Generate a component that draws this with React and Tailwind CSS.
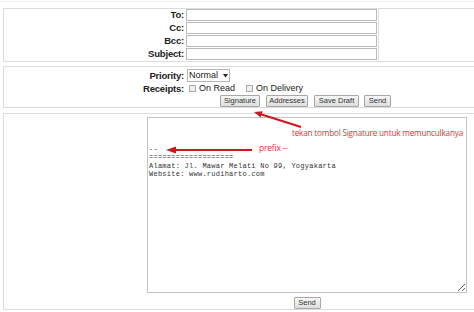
import React from "react";

function Btn({ w, children }) {
  return (
    <div
      className={`${w} h-[12px] flex items-center justify-center border border-[#a8a8a8] rounded-[1px] bg-gradient-to-b from-[#f6f6f6] to-[#dedede] text-[7.5px] leading-none text-[#333]`}
    >
      {children}
    </div>
  );
}

function Row({ label, children }) {
  return (
    <div className="flex h-[13px] items-start">
      <div className="w-[180px] text-right font-bold text-[9.5px] leading-[12px] text-[#222] tracking-[-0.2px]">{label}</div>
      {children}
    </div>
  );
}

export default function App() {
  const sig = "\n\n\n--\n===================\nAlamat: Jl. Mawar Melati No 99, Yogyakarta\nWebsite: www.rudiharto.com";
  return (
    <div className="relative w-[474px] h-[312px] overflow-hidden bg-white font-['Liberation_Sans',Arial,sans-serif] text-[#222]">
      <div className="h-px mt-[1px] bg-[#eeeeee]" />
      {/* Panel 1 */}
      <div className="mt-[6px] ml-[3px] w-[480px] border border-[#dcdcdc] flex">
        <div className="w-[375px] border-r border-[#dcdcdc] flex flex-col">
          {["To:", "Cc:", "Bcc:", "Subject:"].map((l) => (
            <Row key={l} label={l}>
              <div className="ml-[2px] w-[191px] h-[12px] border border-[#b9b9b9] bg-white" />
            </Row>
          ))}
        </div>
        <div className="flex-1" />
      </div>
      {/* Panel 2 */}
      <div className="mt-[4px] ml-[3px] w-[480px] border border-[#dcdcdc] pt-[2px] flex flex-col">
        <div className="flex h-[13px] items-start">
          <div className="w-[180px] text-right font-bold text-[9.5px] leading-[13px] text-[#222] tracking-[-0.2px]">Priority:</div>
          <div className="ml-[3px] w-[43px] h-[13px] border border-[#b5b5b5] bg-white flex items-center pl-[1px]">
            <span className="text-[9px] leading-none text-[#222]">Normal</span>
            <svg width="5" height="4" viewBox="0 0 5 4" className="ml-[5px]">
              <polygon points="0,0 5,0 2.5,3.5" fill="#222" />
            </svg>
          </div>
        </div>
        <div className="flex h-[13px] items-center">
          <div className="w-[180px] text-right font-bold text-[9.5px] leading-[13px] text-[#222] tracking-[-0.2px]">Receipts:</div>
          <div className="ml-[5px] w-[7px] h-[7px] border border-[#aaaaaa] bg-[#efefef]" />
          <span className="ml-[3px] text-[9px] leading-none text-[#222]">On Read</span>
          <div className="ml-[11px] w-[7px] h-[7px] border border-[#aaaaaa] bg-[#efefef]" />
          <span className="ml-[3px] text-[9px] leading-none text-[#222]">On Delivery</span>
        </div>
        <div className="flex h-[12px] pl-[216px]">
          <Btn w="w-[40px]">Signature</Btn>
          <div className="w-[6px]" />
          <Btn w="w-[42px]">Addresses</Btn>
          <div className="w-[6px]" />
          <Btn w="w-[45px]">Save Draft</Btn>
          <div className="w-[5px]" />
          <Btn w="w-[27px]">Send</Btn>
        </div>
      </div>
      {/* Panel 3 */}
      <div className="mt-[5px] ml-[3px] w-[480px] border border-[#dcdcdc] pt-[3px] pl-[143px] flex flex-col">
        <div className="w-[320px] flex flex-col items-center">
          <textarea
            readOnly
            defaultValue={sig}
            className="w-[320px] h-[176px] border border-[#c4c4c4] bg-white pl-[1px] pt-[1px] font-['Liberation_Mono',monospace] text-[7px] tracking-[0.25px] leading-[8.5px] text-[#333] outline-none"
          />
          <div className="mt-[4px] mb-0">
            <Btn w="w-[27px]">Send</Btn>
          </div>
        </div>
      </div>

      {/* Annotations */}
      <svg className="absolute left-0 top-0" width="474" height="312" viewBox="0 0 474 312">
        <line x1="301" y1="127" x2="260" y2="114" stroke="#d0161c" strokeWidth="2" />
        <polygon points="254,112 262.6,111.3 260.6,117.5" fill="#d0161c" />
        <line x1="252" y1="150" x2="174" y2="150" stroke="#d0161c" strokeWidth="2.2" />
        <polygon points="166,150 176,146.5 176,153.5" fill="#d0161c" />
      </svg>
      <div className="absolute left-[292px] top-[128px] text-[8.2px] leading-[10px] text-[#e8323a] whitespace-nowrap font-['Open_Sans',sans-serif] tracking-[-0.2px]">
        tekan tombol Signature untuk memunculkanya
      </div>
      <div className="absolute left-[259px] top-[143px] text-[8.5px] leading-[10px] text-[#e8323a] whitespace-nowrap font-['Open_Sans',sans-serif] tracking-[-0.2px]">
        prefix --
      </div>
    </div>
  );
}
